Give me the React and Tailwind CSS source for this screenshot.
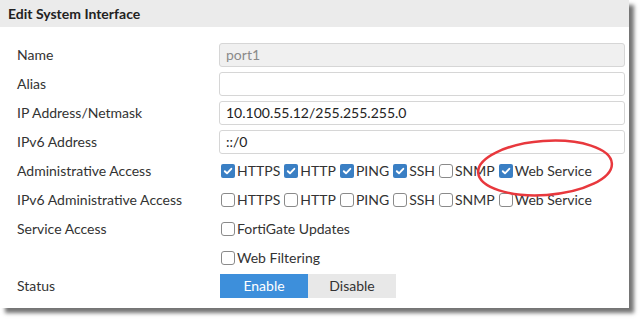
const font = { fontFamily: "Lato, 'Open Sans', sans-serif" };

function Check({ checked }) {
  if (checked) {
    return (
      <span className="inline-flex h-[14px] w-[14px] shrink-0 items-center justify-center rounded-[2px] bg-[#3a7fc4]">
        <svg width="10" height="10" viewBox="0 0 10 10">
          <path d="M1.8 5.2 L4 7.3 L8.3 2.8" fill="none" stroke="#fff" strokeWidth="1.9" strokeLinecap="round" strokeLinejoin="round" />
        </svg>
      </span>
    );
  }
  return <span className="inline-block h-[14px] w-[14px] shrink-0 rounded-[3px] border-[1.5px] border-[#8a8a8a] bg-white" />;
}

function Opt({ label, checked }) {
  return (
    <span className="flex items-center gap-[2px]">
      <Check checked={checked} />
      <span>{label}</span>
    </span>
  );
}

function Row({ label, children }) {
  return (
    <div className="flex h-[29px] items-center">
      <div className="w-[202px] shrink-0">{label}</div>
      <div className="flex flex-1 items-center">{children}</div>
    </div>
  );
}

function Input({ value, disabled }) {
  return (
    <div
      className={`flex h-[24px] w-full items-center rounded-[3px] border border-[#d6d6d6] px-[6px] ${
        disabled ? "bg-[#f0f0f0] text-[#8a8a8a]" : "bg-white text-[#222]"
      }`}
    >
      {value}
    </div>
  );
}

const services = ["HTTPS", "HTTP", "PING", "SSH", "SNMP", "Web Service"];

export default function App() {
  const admin = [true, true, true, true, false, true];
  return (
    <div className="relative h-[324px] w-[644px] bg-white" style={font}>
      <div className="w-[629px] h-[308px] bg-white shadow-[5px_5px_4px_rgba(0,0,0,0.55)] text-[14px] text-[#333]">
        <div className="flex h-[27px] items-center bg-[#ebebeb] px-[8px] text-[14px] font-bold text-[#222]">
          Edit System Interface
        </div>
        <div className="pl-[17px] pr-[4px] pt-[13px]">
          <Row label="Name">
            <Input value="port1" disabled />
          </Row>
          <Row label="Alias">
            <Input value="" />
          </Row>
          <Row label="IP Address/Netmask">
            <Input value="10.100.55.12/255.255.255.0" />
          </Row>
          <Row label="IPv6 Address">
            <Input value="::/0" />
          </Row>
          <Row label="Administrative Access">
            <div className="flex gap-[4px] pl-[2px]">
              {services.map((s, i) => (
                <Opt key={s} label={s} checked={admin[i]} />
              ))}
            </div>
          </Row>
          <Row label="IPv6 Administrative Access">
            <div className="flex gap-[4px] pl-[2px]">
              {services.map((s) => (
                <Opt key={s} label={s} checked={false} />
              ))}
            </div>
          </Row>
          <Row label="Service Access">
            <div className="pl-[2px]">
              <Opt label="FortiGate Updates" />
            </div>
          </Row>
          <Row label="">
            <div className="pl-[2px]">
              <Opt label="Web Filtering" />
            </div>
          </Row>
          <div className="flex h-[27px] items-center">
            <div className="w-[202px] shrink-0">Status</div>
            <div className="flex h-[24px] pl-[1px]">
              <div className="flex w-[88px] items-center justify-center bg-[#3d8fdb] text-white">Enable</div>
              <div className="flex w-[88px] items-center justify-center bg-[#e8e8e8] text-[#333]">Disable</div>
            </div>
          </div>
        </div>
      </div>
      <svg className="pointer-events-none absolute left-0 top-0" width="644" height="324">
        <ellipse cx="545" cy="168" rx="67" ry="27" transform="rotate(-4 545 168)" fill="none" stroke="#e8383d" strokeWidth="2.5" />
      </svg>
    </div>
  );
}
